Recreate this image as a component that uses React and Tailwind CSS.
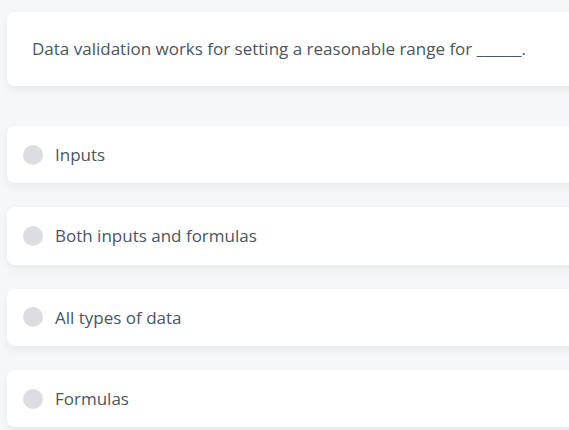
export default function App() {
    const options = ["Inputs", "Both inputs and formulas", "All types of data", "Formulas"];

    return (
        <div
            className="w-[569px] h-[430px] overflow-hidden bg-[#f6f7f9]"
            style={{ fontFamily: '"Open Sans", "Noto Sans", sans-serif' }}
        >
            <div className="w-[640px] pl-[7px] pt-[12px]">
                {/* Question */}
                <div className="bg-white rounded-lg h-[74px] flex items-center px-[25px] shadow-[0_4px_10px_rgba(0,0,0,0.06)]">
                    <p className="text-[17px] text-[#4b5563]">
                        Data validation works for setting a reasonable range for ______.
                    </p>
                </div>

                {/* Options */}
                <div className="mt-[40px] flex flex-col gap-[24px]">
                    {options.map((opt) => (
                        <div
                            key={opt}
                            className="bg-white rounded-lg h-[57.33px] flex items-center pl-[16px] shadow-[0_4px_10px_rgba(0,0,0,0.06)]"
                        >
                            <span className="w-[20px] h-[20px] rounded-full bg-[#dcdde0] shrink-0"></span>
                            <span className="ml-[12px] text-[17px] text-[#4b5563]">{opt}</span>
                        </div>
                    ))}
                </div>
            </div>
        </div>
    );
}
